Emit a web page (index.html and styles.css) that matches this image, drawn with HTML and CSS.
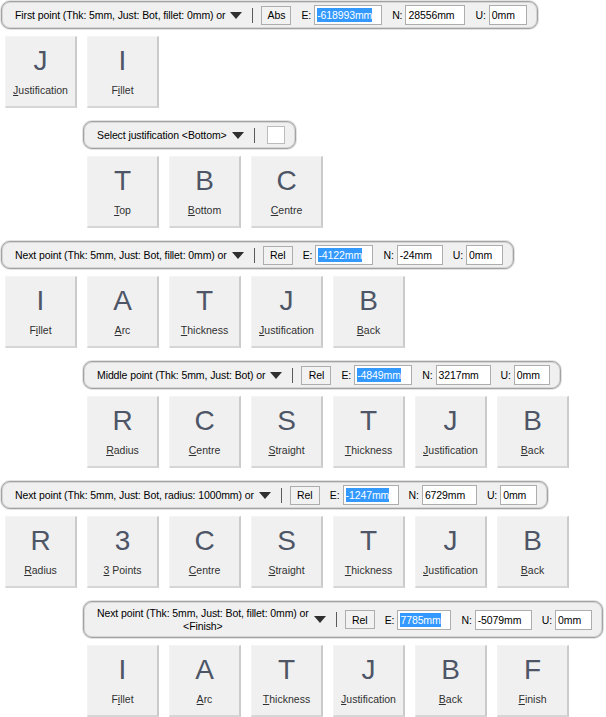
FILE: index.html
```html
<!DOCTYPE html>
<html lang="en">
<head>
<meta charset="utf-8">
<title>Wall input prompts</title>
<link rel="stylesheet" href="styles.css">
</head>
<body>
<main class="page">

  <section class="group">
    <div class="bar">
      <span class="prompt">First point (Thk: 5mm, Just: Bot, fillet: 0mm) or</span>
      <span class="caret"></span>
      <span class="sep"></span>
      <span class="mode">Abs</span>
      <span class="coord">E:</span><span class="field w68"><span class="sel">-618993mm</span></span>
      <span class="coord">N:</span><span class="field w60">28556mm</span>
      <span class="coord">U:</span><span class="field w38">0mm</span>
    </div>
    <div class="keys">
      <div class="key"><span class="glyph">J</span><span class="label"><u>J</u>ustification</span></div>
      <div class="key"><span class="glyph">I</span><span class="label">F<u>i</u>llet</span></div>
    </div>
  </section>

  <section class="group indent">
    <div class="bar">
      <span class="prompt">Select justification &lt;Bottom&gt;</span>
      <span class="caret"></span>
      <span class="sep"></span>
      <span class="box"></span>
    </div>
    <div class="keys">
      <div class="key"><span class="glyph">T</span><span class="label"><u>T</u>op</span></div>
      <div class="key"><span class="glyph">B</span><span class="label"><u>B</u>ottom</span></div>
      <div class="key"><span class="glyph">C</span><span class="label"><u>C</u>entre</span></div>
    </div>
  </section>

  <section class="group">
    <div class="bar">
      <span class="prompt">Next point (Thk: 5mm, Just: Bot, fillet: 0mm) or</span>
      <span class="caret"></span>
      <span class="sep"></span>
      <span class="mode">Rel</span>
      <span class="coord">E:</span><span class="field w58"><span class="sel">-4122mm</span></span>
      <span class="coord">N:</span><span class="field w46">-24mm</span>
      <span class="coord">U:</span><span class="field w37">0mm</span>
    </div>
    <div class="keys">
      <div class="key"><span class="glyph">I</span><span class="label">F<u>i</u>llet</span></div>
      <div class="key"><span class="glyph">A</span><span class="label"><u>A</u>rc</span></div>
      <div class="key"><span class="glyph">T</span><span class="label"><u>T</u>hickness</span></div>
      <div class="key"><span class="glyph">J</span><span class="label"><u>J</u>ustification</span></div>
      <div class="key"><span class="glyph">B</span><span class="label"><u>B</u>ack</span></div>
    </div>
  </section>

  <section class="group indent">
    <div class="bar">
      <span class="prompt">Middle point (Thk: 5mm, Just: Bot) or</span>
      <span class="caret"></span>
      <span class="sep"></span>
      <span class="mode">Rel</span>
      <span class="coord">E:</span><span class="field w58"><span class="sel">-4849mm</span></span>
      <span class="coord">N:</span><span class="field w55">3217mm</span>
      <span class="coord">U:</span><span class="field w36">0mm</span>
    </div>
    <div class="keys">
      <div class="key"><span class="glyph">R</span><span class="label"><u>R</u>adius</span></div>
      <div class="key"><span class="glyph">C</span><span class="label"><u>C</u>entre</span></div>
      <div class="key"><span class="glyph">S</span><span class="label"><u>S</u>traight</span></div>
      <div class="key"><span class="glyph">T</span><span class="label"><u>T</u>hickness</span></div>
      <div class="key"><span class="glyph">J</span><span class="label"><u>J</u>ustification</span></div>
      <div class="key"><span class="glyph">B</span><span class="label"><u>B</u>ack</span></div>
    </div>
  </section>

  <section class="group">
    <div class="bar">
      <span class="prompt">Next point (Thk: 5mm, Just: Bot, radius: 1000mm) or</span>
      <span class="caret"></span>
      <span class="sep"></span>
      <span class="mode">Rel</span>
      <span class="coord">E:</span><span class="field w56"><span class="sel">-1247mm</span></span>
      <span class="coord">N:</span><span class="field w55">6729mm</span>
      <span class="coord">U:</span><span class="field w37">0mm</span>
    </div>
    <div class="keys">
      <div class="key"><span class="glyph">R</span><span class="label"><u>R</u>adius</span></div>
      <div class="key"><span class="glyph">3</span><span class="label"><u>3</u> Points</span></div>
      <div class="key"><span class="glyph">C</span><span class="label"><u>C</u>entre</span></div>
      <div class="key"><span class="glyph">S</span><span class="label"><u>S</u>traight</span></div>
      <div class="key"><span class="glyph">T</span><span class="label"><u>T</u>hickness</span></div>
      <div class="key"><span class="glyph">J</span><span class="label"><u>J</u>ustification</span></div>
      <div class="key"><span class="glyph">B</span><span class="label"><u>B</u>ack</span></div>
    </div>
  </section>

  <section class="group indent">
    <div class="bar tall">
      <span class="prompt two">Next point (Thk: 5mm, Just: Bot, fillet: 0mm) or<br>&lt;Finish&gt;</span>
      <span class="caret"></span>
      <span class="sep"></span>
      <span class="mode">Rel</span>
      <span class="coord">E:</span><span class="field w54"><span class="sel">7785mm</span></span>
      <span class="coord">N:</span><span class="field w57">-5079mm</span>
      <span class="coord">U:</span><span class="field w37">0mm</span>
    </div>
    <div class="keys">
      <div class="key"><span class="glyph">I</span><span class="label">F<u>i</u>llet</span></div>
      <div class="key"><span class="glyph">A</span><span class="label"><u>A</u>rc</span></div>
      <div class="key"><span class="glyph">T</span><span class="label"><u>T</u>hickness</span></div>
      <div class="key"><span class="glyph">J</span><span class="label"><u>J</u>ustification</span></div>
      <div class="key"><span class="glyph">B</span><span class="label"><u>B</u>ack</span></div>
      <div class="key"><span class="glyph">F</span><span class="label"><u>F</u>inish</span></div>
    </div>
  </section>

</main>
</body>
</html>
```

FILE: styles.css
```css
* { box-sizing: border-box; }

html, body {
  margin: 0;
  padding: 0;
  background: #ffffff;
}

body {
  font-family: "Liberation Sans", Arial, sans-serif;
  font-size: 10.5px;
  letter-spacing: -0.1px;
  color: #000;
}

.page {
  display: flex;
  flex-direction: column;
  gap: 13px;
  padding: 1px 0 0 1px;
}

.group {
  display: flex;
  flex-direction: column;
  align-items: flex-start;
  gap: 7px;
}

.group.indent {
  margin-left: 82px;
}

/* ---------- prompt bar ---------- */
.bar {
  display: flex;
  align-items: center;
  height: 28px;
  padding: 0 10px 0 13px;
  background: #f0f0f0;
  border: 1px solid #a3a3a3;
  border-radius: 9px;
  box-shadow: inset 0 0 0 1px #d6d6d6, 0 0 0 1px #e2e2e2;
  white-space: nowrap;
}

.bar.tall {
  height: 37px;
}

.prompt {
  line-height: 13px;
}

.prompt.two {
  text-align: center;
}

.caret {
  width: 0;
  height: 0;
  margin-left: 5px;
  border-left: 6px solid transparent;
  border-right: 6px solid transparent;
  border-top: 7px solid #2f2f2f;
}

.sep {
  width: 1px;
  height: 15px;
  margin: 0 8px 0 10px;
  background: #5a5a5a;
}

.mode {
  display: flex;
  align-items: center;
  justify-content: center;
  width: 30px;
  height: 19px;
  background: #f2f2f2;
  border: 1px solid #adadad;
  margin-right: 10px;
}

.box {
  width: 18px;
  height: 18px;
  background: #fff;
  border: 1px solid #bcbcbc;
  margin-left: 4px;
}

.coord {
  margin-right: 3px;
}

.field {
  display: flex;
  align-items: center;
  height: 20px;
  padding: 0 2px;
  background: #fff;
  border: 1px solid #adadad;
  margin-right: 10px;
}

.field:last-child {
  margin-right: 0;
}

.sel {
  background: #3399ff;
  color: #fff;
  line-height: 14px;
}

.w68 { width: 68px; }
.w60 { width: 60px; }
.w58 { width: 58px; }
.w57 { width: 57px; }
.w56 { width: 56px; }
.w55 { width: 55px; }
.w54 { width: 54px; }
.w46 { width: 46px; }
.w38 { width: 38px; }
.w37 { width: 37px; }
.w36 { width: 36px; }

/* ---------- key buttons ---------- */
.keys {
  display: flex;
  gap: 10px;
  margin-left: 4px;
}

.key {
  display: flex;
  flex-direction: column;
  align-items: center;
  width: 72px;
  height: 72px;
  background: #f0f0f0;
  border-top: 1px solid #f4f4f4;
  border-left: 1px solid #f4f4f4;
  border-right: 2px solid #cbcbcb;
  border-bottom: 2px solid #d6d6d6;
  letter-spacing: 0;
}

.glyph {
  margin-top: 8px;
  height: 32px;
  line-height: 32px;
  font-size: 28px;
  color: #4d5566;
}

.label {
  margin-top: 7px;
  font-size: 10.5px;
  line-height: 13px;
  color: #303030;
}

.label u {
  text-decoration-thickness: 1px;
  text-underline-offset: 1px;
}
```
